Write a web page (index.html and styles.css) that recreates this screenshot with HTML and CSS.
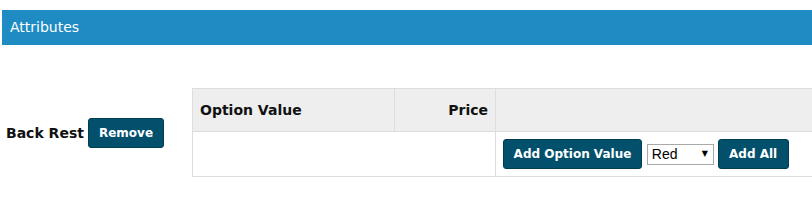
FILE: index.html
```html
<!DOCTYPE html>
<html lang="en">
<head>
    <meta charset="UTF-8">
    <title>Attributes</title>
    <link rel="stylesheet" href="styles.css">
</head>
<body>
    <div class="panel">
        <div class="panel-heading">Attributes</div>
        <div class="attr-row">
            <span class="attr-name">Back Rest</span>
            <button class="btn btn-remove">Remove</button>
            <table class="option-table">
                <thead>
                    <tr>
                        <th class="col-value">Option Value</th>
                        <th class="col-price">Price</th>
                        <th class="col-actions"></th>
                    </tr>
                </thead>
                <tbody>
                    <tr>
                        <td colspan="2"></td>
                        <td class="actions">
                            <button class="btn btn-add">Add Option Value</button>
                            <span class="select-wrap">
                                <select class="value-select">
                                    <option>Red</option>
                                    <option>Blue</option>
                                    <option>Black</option>
                                </select>
                            </span>
                            <button class="btn btn-all">Add All</button>
                        </td>
                    </tr>
                </tbody>
            </table>
        </div>
    </div>
</body>
</html>
```

FILE: styles.css
```css
body {
    margin: 0;
    font-family: "DejaVu Sans", Verdana, sans-serif;
    font-size: 12px;
    color: #111;
    overflow: hidden;
}

.panel {
    padding-top: 10px;
    padding-left: 2px;
}

.panel-heading {
    background-color: #1f8bc3;
    color: #fff;
    font-size: 14px;
    height: 35px;
    line-height: 35px;
    padding-left: 8px;
}

.attr-row {
    display: flex;
    align-items: center;
    margin-top: 43px;
    padding-left: 4px;
}

.attr-row > * {
    flex-shrink: 0;
}

.attr-name {
    font-weight: bold;
    font-size: 14px;
    width: 82px;
}

.btn {
    background-color: #02506b;
    color: #fff;
    border: 1px solid #013d52;
    border-radius: 3px;
    font-family: "DejaVu Sans", Verdana, sans-serif;
    font-weight: bold;
    font-size: 12px;
    height: 30px;
    padding: 0;
    cursor: pointer;
}

.btn-remove {
    width: 76px;
}

.option-table {
    margin-left: 28px;
    border-collapse: collapse;
}

.option-table th,
.option-table td {
    border: 1px solid #ddd;
    padding: 0 7px;
}

.option-table th {
    background-color: #eee;
    height: 42px;
    font-size: 14px;
    text-align: left;
}

.option-table td {
    height: 44px;
}

.col-value {
    width: 187px;
}

.col-price {
    width: 86px;
    text-align: right !important;
}

.col-actions {
    width: 400px;
}

.actions {
    white-space: nowrap;
}

.actions > * {
    vertical-align: middle;
}

.btn-add {
    width: 139px;
}

.select-wrap {
    position: relative;
    display: inline-block;
    margin-left: 1px;
}

.select-wrap::after {
    content: "\25BC";
    position: absolute;
    right: 6px;
    top: 5px;
    font-size: 8px;
    color: #000;
    pointer-events: none;
}

.value-select {
    appearance: none;
    -webkit-appearance: none;
    display: block;
    width: 67px;
    height: 21px;
    font-family: "Liberation Sans", Arial, sans-serif;
    font-size: 14px;
    color: #000;
    border: 1px solid #a9a9a9;
    background: #fff;
    padding: 0 4px;
}

.btn-all {
    width: 71px;
}
```
